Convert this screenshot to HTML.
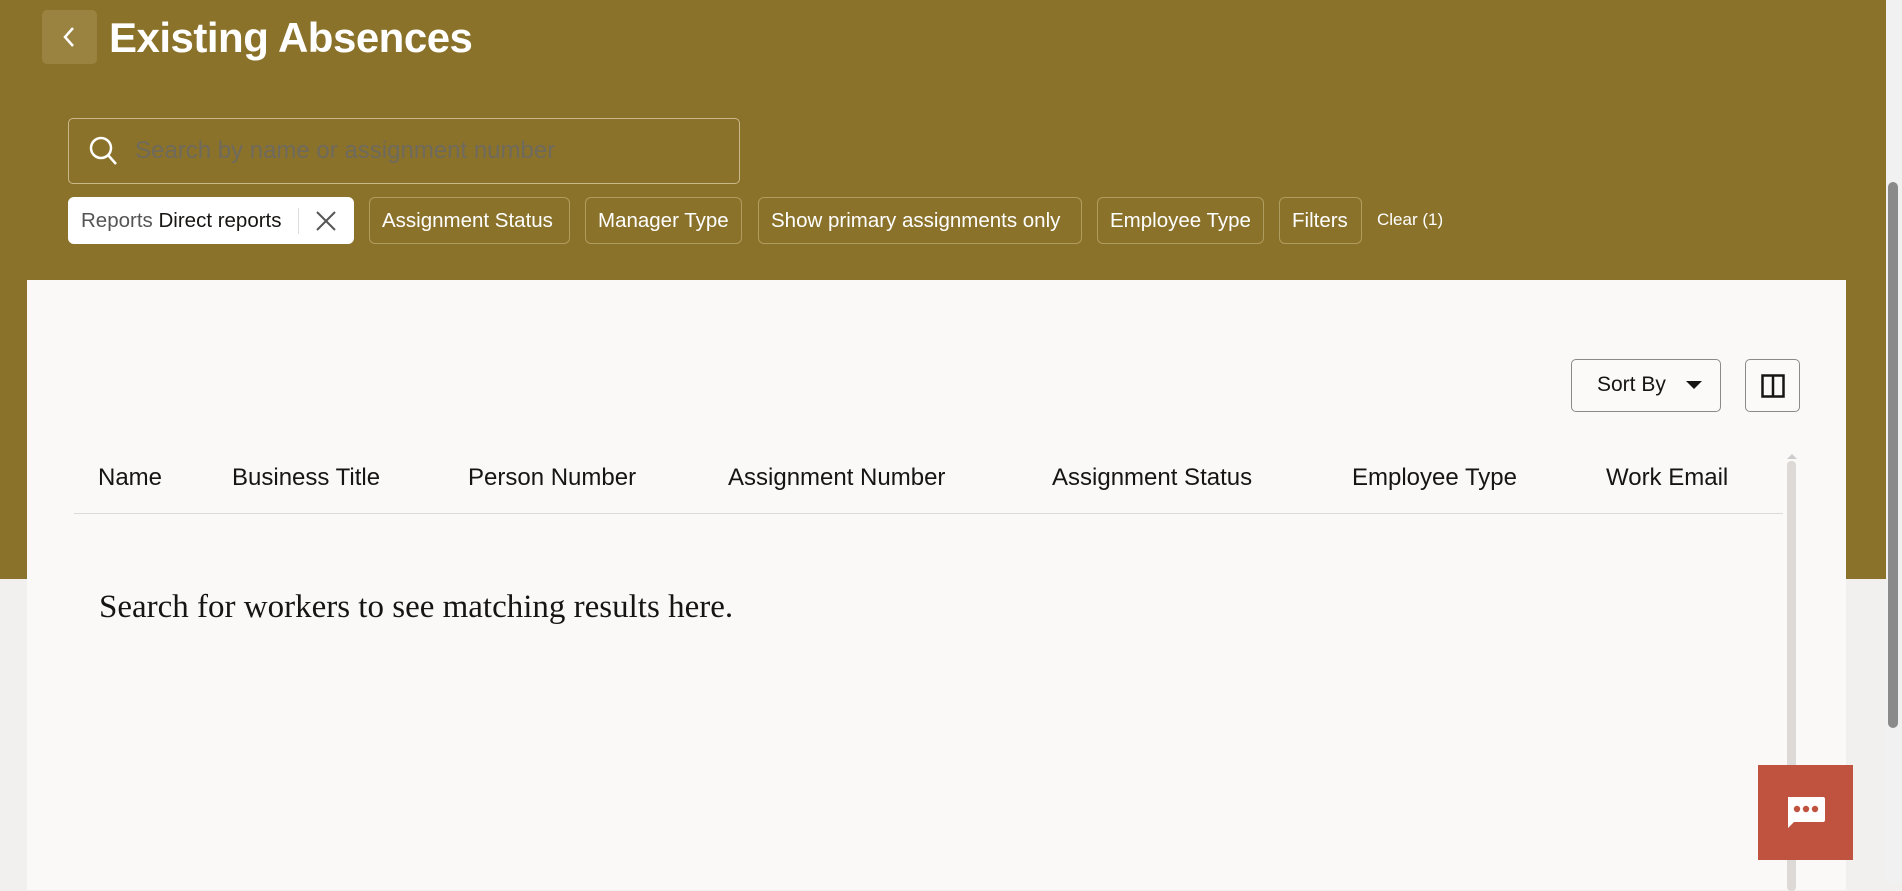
<!DOCTYPE html>
<html><head><style>
*{box-sizing:border-box;margin:0;padding:0}
body{width:1902px;height:883px;overflow:hidden;background:#f1f0ee;font-family:"Liberation Sans",sans-serif;position:relative}
.gold{position:absolute;left:0;top:0;width:1886px;height:579px;background:#8b722a}
.back{position:absolute;left:42px;top:10px;width:55px;height:54px;border-radius:5px;background:#9a8340}
.title{position:absolute;left:109px;top:14px;font-size:42px;font-weight:bold;color:#fff;letter-spacing:-0.5px}
.search{position:absolute;left:68px;top:118px;width:672px;height:66px;border:1px solid #c9b988;border-radius:5px}
.search span{position:absolute;left:66px;top:18px;font-size:24px;color:#6e6a5e}
.chip{position:absolute;top:197px;height:47px;border:1px solid #b09c5e;border-radius:6px;color:#fff;font-size:20.5px;line-height:45px;padding:0 12px;white-space:nowrap}
.card{position:absolute;left:27px;top:280px;width:1819px;height:610px;background:#faf9f7}
.th{position:absolute;top:464px;font-size:24px;color:#161513}
.btn{position:absolute;top:359px;height:53px;border:1px solid #8a8a8a;border-radius:5px;background:#fbfaf8}
</style></head><body>
<div class="gold"></div>
<div class="back"><svg width="55" height="54"><path d="M31 18 L23 27 L31 36" fill="none" stroke="#fff" stroke-width="2.5"/></svg></div>
<div class="title">Existing Absences</div>
<div class="search"><svg style="position:absolute;left:18px;top:15px" width="34" height="34"><circle cx="14" cy="14" r="10" fill="none" stroke="#fff" stroke-width="2.5"/><path d="M21 21 L29 30" stroke="#fff" stroke-width="2.5"/></svg><span>Search by name or assignment number</span></div>
<div class="chip" style="left:68px;width:286px;background:#fff;border-color:#fff;color:#161513"><span style="color:#555">Reports</span> Direct reports<span style="position:absolute;left:229px;top:10px;height:26px;border-left:1px solid #ddd"></span><svg style="position:absolute;left:246px;top:12px" width="22" height="22"><path d="M2 2L20 20M20 2L2 20" stroke="#555" stroke-width="2"/></svg></div>
<div class="chip" style="left:369px;width:201px">Assignment Status</div>
<div class="chip" style="left:585px;width:157px">Manager Type</div>
<div class="chip" style="left:758px;width:324px">Show primary assignments only</div>
<div class="chip" style="left:1097px;width:167px">Employee Type</div>
<div class="chip" style="left:1279px;width:83px">Filters</div>
<div style="position:absolute;left:1377px;top:210px;font-size:17px;color:#fff">Clear (1)</div>
<div class="card"></div>
<div class="btn" style="left:1571px;width:150px"><span style="position:absolute;left:25px;top:13px;font-size:21px;color:#161513">Sort By</span><svg style="position:absolute;left:114px;top:21px" width="16" height="10"><path d="M0 0H16L8 8Z" fill="#161513"/></svg></div>
<div class="btn" style="left:1745px;width:55px"><svg style="position:absolute;left:15px;top:14px" width="25" height="25"><rect x="1.5" y="1.5" width="21" height="21" fill="none" stroke="#161513" stroke-width="2.5"/><path d="M12 1V23" stroke="#161513" stroke-width="2.5"/></svg></div>
<div class="th" style="left:98px">Name</div>
<div class="th" style="left:232px">Business Title</div>
<div class="th" style="left:468px">Person Number</div>
<div class="th" style="left:728px">Assignment Number</div>
<div class="th" style="left:1052px">Assignment Status</div>
<div class="th" style="left:1352px">Employee Type</div>
<div class="th" style="left:1606px">Work Email</div>
<div style="position:absolute;left:74px;top:513px;width:1709px;height:1px;background:#dedbd6"></div>
<div style="position:absolute;left:1787px;top:461px;width:9px;height:430px;background:#dcd9d6;border-radius:4px"></div>
<div style="position:absolute;left:1787px;top:449px;width:0;height:0;border:5px solid transparent;border-bottom-color:#ccc"></div>
<div style="position:absolute;left:99px;top:589px;font-family:'Liberation Serif',serif;font-size:33px;color:#161513;white-space:nowrap">Search for workers to see matching results here.</div>
<div style="position:absolute;left:1758px;top:765px;width:95px;height:95px;background:#c0533f"><svg style="position:absolute;left:27px;top:31px" width="42" height="34"><path d="M3 1H38Q40 1 40 3V24Q40 26 38 26H9L3 32Z" fill="#fff"/><circle cx="12" cy="13" r="3.2" fill="#c0533f"/><circle cx="21" cy="13" r="3.2" fill="#c0533f"/><circle cx="30" cy="13" r="3.2" fill="#c0533f"/></svg></div>
<div style="position:absolute;left:1886px;top:0;width:16px;height:883px;background:#f1f1f1"></div>
<div style="position:absolute;left:1888px;top:182px;width:10px;height:546px;background:#8a8a8a;border-radius:5px"></div>
</body></html>
